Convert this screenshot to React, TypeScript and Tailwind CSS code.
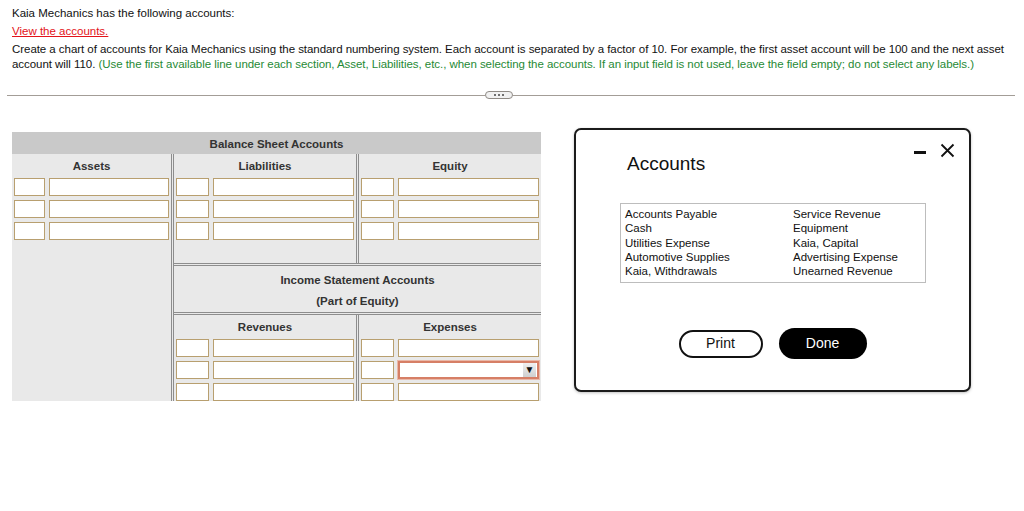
import React from "react";

const font = { fontFamily: '"Liberation Sans", Arial, sans-serif' };

function Row({ small, select }: { small: string; select?: boolean }) {
  return (
    <div className="flex gap-[4px] h-[18px]">
      <div className={`${small} h-full bg-white border-[1.5px] border-[#b89f6f]`} />
      {select ? (
        <div className="flex-1 h-full bg-white border-2 border-[#d67f66] shadow-[0_0_0_1px_#eab8a8] flex justify-end items-center pr-[1px]">
          <div className="w-[13px] h-[14px] bg-gradient-to-b from-[#f0f0f0] to-[#cfcfcf] flex items-center justify-center text-[10px] text-[#111] leading-none">▼</div>
        </div>
      ) : (
        <div className="flex-1 h-full bg-white border-[1.5px] border-[#b89f6f]" />
      )}
    </div>
  );
}

function Column({ title, small, selectRow }: { title: string; small: string; selectRow?: number }) {
  return (
    <div className="flex-1 flex flex-col px-[2px]">
      <div className="h-[24px] pt-[2px] flex items-center justify-center font-bold text-[11.5px] text-[#333]">{title}</div>
      <div className="flex flex-col gap-[4px]">
        {[0, 1, 2].map((i) => (
          <Row key={i} small={small} select={selectRow === i} />
        ))}
      </div>
    </div>
  );
}

export default function App() {
  return (
    <div className="w-[1024px] h-[511px] bg-white text-[#111] overflow-hidden" style={font}>
      <div className="pl-[12px] pr-[4px] pt-[6px] text-[11.5px] leading-[15px]">
        <p>Kaia Mechanics has the following accounts:</p>
        <p className="mt-[3px] text-[#e3141b] underline">View the accounts.</p>
        <p className="mt-[3px] whitespace-nowrap tracking-[-0.05px]">
          Create a chart of accounts for Kaia Mechanics using the standard numbering system. Each account is separated by a factor of 10. For example, the first asset account will be 100 and the next asset
          <br />
          account will 110.{" "}
          <span className="text-[#1f8a35]">
            (Use the first available line under each section, Asset, Liabilities, etc., when selecting the accounts. If an input field is not used, leave the field empty; do not select any labels.)
          </span>
        </p>
      </div>

      <div className="mt-[19px] ml-[7px] w-[1008px] flex items-center h-[8px]">
        <div className="w-[478px] h-[1px] bg-[#a39d97]" />
        <div className="w-[28px] h-[8px] rounded-full border border-[#8f8a85] bg-[#f1f1f1] flex items-center justify-center gap-[2px]">
          <span className="w-[2px] h-[2px] bg-[#444] rounded-full" />
          <span className="w-[2px] h-[2px] bg-[#444] rounded-full" />
          <span className="w-[2px] h-[2px] bg-[#444] rounded-full" />
        </div>
        <div className="flex-1 h-[1px] bg-[#a39d97]" />
      </div>

      <div className="flex pl-[12px] mt-[29px]">
        {/* Table */}
        <div className="mt-[4px] w-[529px] bg-[#e9e9e9]">
          <div className="h-[22px] pt-[3px] bg-[#c9c9c9] flex items-center justify-center font-bold text-[11.5px] text-[#333]">
            Balance Sheet Accounts
          </div>
          <div className="flex h-[247px]">
            <div className="w-[159px] flex flex-col">
              <Column title="Assets" small="w-[31px]" />
            </div>
            <div className="flex-1 border-l-[3px] border-double border-[#8d8d8d] flex flex-col">
              <div className="flex h-[109px]">
                <Column title="Liabilities" small="w-[33px]" />
                <div className="w-[3px] border-l-[3px] border-double border-[#8d8d8d]" />
                <Column title="Equity" small="w-[33px]" />
              </div>
              <div className="border-t-[3px] border-b-[3px] border-double border-[#8d8d8d] pt-[4px] h-[52px] flex flex-col items-center text-[11.5px] font-bold text-[#333] leading-[21px]">
                <div>Income Statement Accounts</div>
                <div>(Part of Equity)</div>
              </div>
              <div className="flex flex-1">
                <Column title="Revenues" small="w-[33px]" />
                <div className="w-[3px] border-l-[3px] border-double border-[#8d8d8d]" />
                <Column title="Expenses" small="w-[33px]" selectRow={1} />
              </div>
            </div>
          </div>
        </div>

        {/* Modal */}
        <div className="ml-[33px] w-[397px] h-[264px] border-2 border-[#1b1b1b] rounded-[7px] bg-white shadow-[0_1px_3px_rgba(0,0,0,0.25)] relative flex flex-col">
          <div className="absolute top-[13px] right-[14px] flex items-center gap-[14px]">
            <div className="w-[12px] h-[3px] bg-[#111] mt-[4px]" />
            <svg width="15" height="15" viewBox="0 0 15 15">
              <path d="M1.5 1.5 L13.5 13.5 M13.5 1.5 L1.5 13.5" stroke="#111" strokeWidth="1.8" fill="none" />
            </svg>
          </div>
          <div className="ml-[51px] mt-[23px] text-[19px] leading-[22px] text-[#111]">Accounts</div>
          <div className="ml-[44px] mt-[28px] w-[306px] h-[80px] border border-[#bdbdbd] pl-[4px] pt-[3px] grid grid-cols-[168px_1fr] text-[11.5px] leading-[14.3px] text-[#111]">
            <div>
              <div>Accounts Payable</div>
              <div>Cash</div>
              <div>Utilities Expense</div>
              <div>Automotive Supplies</div>
              <div>Kaia, Withdrawals</div>
            </div>
            <div>
              <div>Service Revenue</div>
              <div>Equipment</div>
              <div>Kaia, Capital</div>
              <div>Advertising Expense</div>
              <div>Unearned Revenue</div>
            </div>
          </div>
          <div className="mt-[45px] flex justify-center items-center gap-[16px]">
            <div className="w-[84px] h-[28px] rounded-full border-2 border-[#111] flex items-center justify-center text-[14px] text-[#111]">
              Print
            </div>
            <div className="w-[88px] h-[31px] rounded-full bg-black flex items-center justify-center text-[14px] text-white">
              Done
            </div>
          </div>
        </div>
      </div>
    </div>
  );
}
